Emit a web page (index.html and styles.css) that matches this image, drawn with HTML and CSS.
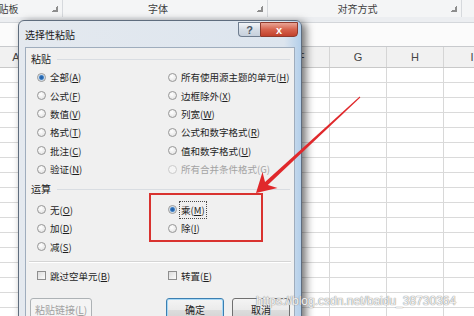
FILE: index.html
```html
<!DOCTYPE html>
<html lang="zh-CN">
<head>
    <meta charset="UTF-8">
    <title>选择性粘贴</title>
    <link rel="stylesheet" href="styles.css">
</head>
<body>

<div class="ribbon">
    <div class="group g1"><span class="glabel">剪贴板</span><i class="launcher"></i></div>
    <div class="group g2"><span class="glabel">字体</span><i class="launcher"></i></div>
    <div class="group g3"><span class="glabel">对齐方式</span><i class="launcher"></i></div>
</div>
<div class="ribbon-foot"></div>
<div class="formula"></div>

<div class="sheet-head">
    <span>A</span><span>B</span><span>C</span><span>D</span><span>E</span>
    <span>F</span><span>G</span><span>H</span><span>I</span>
</div>
<div class="sheet-body"></div>

<div class="dialog">
    <div class="titlebar">
        <span class="title">选择性粘贴</span>
        <div class="caption">
            <span class="cap-help">?</span>
            <span class="cap-close">x</span>
        </div>
    </div>
    <div class="client">
        <div class="sec"><span>粘贴</span></div>
        <div class="opts paste">
            <span class="opt"><i class="rb on"></i>全部(<u>A</u>)</span>
            <span class="opt"><i class="rb"></i>公式(<u>F</u>)</span>
            <span class="opt"><i class="rb"></i>数值(<u>V</u>)</span>
            <span class="opt"><i class="rb"></i>格式(<u>T</u>)</span>
            <span class="opt"><i class="rb"></i>批注(<u>C</u>)</span>
            <span class="opt"><i class="rb"></i>验证(<u>N</u>)</span>
            <span class="opt"><i class="rb"></i>所有使用源主题的单元(<u>H</u>)</span>
            <span class="opt"><i class="rb"></i>边框除外(<u>X</u>)</span>
            <span class="opt"><i class="rb"></i>列宽(<u>W</u>)</span>
            <span class="opt"><i class="rb"></i>公式和数字格式(<u>R</u>)</span>
            <span class="opt"><i class="rb"></i>值和数字格式(<u>U</u>)</span>
            <span class="opt off"><i class="rb"></i>所有合并条件格式(G)</span>
        </div>

        <div class="sec sec-op"><span>运算</span></div>
        <div class="opts ops">
            <span class="opt"><i class="rb"></i>无(<u>O</u>)</span>
            <span class="opt"><i class="rb"></i>加(<u>D</u>)</span>
            <span class="opt"><i class="rb"></i>减(<u>S</u>)</span>
            <span class="opt"><i class="rb on"></i><span class="focus">乘(<u>M</u>)</span></span>
            <span class="opt"><i class="rb"></i>除(<u>I</u>)</span>
        </div>

        <div class="sep"></div>

        <div class="opts checks">
            <span class="opt"><i class="cb"></i>跳过空单元(<u>B</u>)</span>
            <span class="opt"><i class="cb"></i>转置(<u>E</u>)</span>
        </div>

        <div class="buttons">
            <button class="btn btn-link" disabled>粘贴链接(<u>L</u>)</button>
            <button class="btn btn-ok">确定</button>
            <button class="btn btn-cancel">取消</button>
        </div>
    </div>
</div>

<div class="mark-box"></div>
<svg class="mark-arrow" width="474" height="316" viewBox="0 0 474 316">
    <polygon points="359.7,96.6 360.3,97.4 266.2,186.4 263.4,183.4" fill="#e0282b"/>
    <polygon points="256,193 262.5,172 265.6,184.2 277.5,188" fill="#e0282b"/>
</svg>

<div class="watermark">https://blog.csdn.net/baidu_38730364</div>

</body>
</html>
```

FILE: styles.css
```css
* {
    box-sizing: border-box;
}

body {
    margin: 0;
    width: 474px;
    height: 316px;
    overflow: hidden;
    position: relative;
    background: #fff;
    color: #1e1e1e;
    font-family: "Noto Sans CJK SC", "Noto Sans", sans-serif;
    font-size: 10px;
}

/* excel behind the dialog */

.ribbon {
    display: flex;
    height: 17px;
    margin-left: -41px;
    background: #f4f5f6;
    color: #3d3d3d;
}

.group {
    position: relative;
    display: flex;
    padding-right: 14px;
    border-right: 1px solid #d6d9dd;
}

.glabel {
    flex: 1;
    text-align: center;
    line-height: 17px;
}

.launcher {
    position: absolute;
    right: 4px;
    top: 6px;
    width: 6px;
    height: 6px;
    border-right: 1px solid #8d8d8d;
    border-bottom: 1px solid #8d8d8d;
}

.launcher::after {
    content: "";
    position: absolute;
    left: 1px;
    top: 1px;
    width: 3px;
    height: 3px;
    border-right: 1px solid #8d8d8d;
    border-bottom: 1px solid #8d8d8d;
}

.g1 { width: 104px; }
.g2 { width: 205px; }
.g3 { width: 194px; }

.ribbon-foot {
    height: 6px;
    background: #eceef1;
    border-bottom: 1px solid #d4d7db;
}

.formula {
    height: 24px;
    background: #fbfbfb;
    border-bottom: 1px solid #c8cacd;
}

.sheet-head {
    display: flex;
    height: 21px;
    margin-left: -12px;
    background: #f1f1f1;
    border-bottom: 1px solid #c9c9c9;
    color: #444;
    font-family: "Liberation Sans", sans-serif;
    font-size: 11px;
}

.sheet-head span {
    flex: 0 0 57px;
    line-height: 20px;
    text-align: center;
    border-right: 1px solid #d5d5d5;
}

.sheet-body {
    height: 250px;
    margin-left: -12px;
    background-image:
        repeating-linear-gradient(to bottom, transparent 0 14px, #dadada 14px 15px),
        repeating-linear-gradient(to right, transparent 0 56px, #d8d8d8 56px 57px);
}

/* the paste special dialog */

.dialog {
    position: absolute;
    left: 18px;
    top: 20px;
    width: 284px;
    height: 310px;
    padding: 0 6px;
    background: linear-gradient(to right, #e4e9ef, #dde5ee 94%, #b3cfea);
    border: 1px solid #5f6d7e;
    border-radius: 6px 6px 0 0;
    box-shadow: 4px 2px 9px rgba(0, 0, 0, 0.55);
}

.titlebar {
    display: flex;
    justify-content: space-between;
    align-items: flex-start;
    height: 26px;
}

.title {
    line-height: 27px;
    color: #1b1b1b;
}

.caption {
    display: flex;
    margin-top: 1px;
    margin-right: -3px;
}

.cap-help,
.cap-close {
    height: 15px;
    line-height: 14px;
    text-align: center;
    border: 1px solid #6f7d8f;
    font-family: "Liberation Sans", sans-serif;
    font-weight: bold;
}

.cap-help {
    width: 22px;
    border-right: none;
    border-radius: 0 0 0 4px;
    background: linear-gradient(#f2f5f8, #d5dde6 50%, #c6d0dc);
    color: #4a5563;
    font-size: 11px;
}

.cap-close {
    width: 38px;
    border-color: #8e3a2d;
    border-radius: 0 0 4px 0;
    background: linear-gradient(#e9a596, #d6634d 50%, #c2412c);
    color: #fff;
    font-size: 11px;
}

.client {
    height: 290px;
    background: #f0f0f0;
    border: 1px solid #9fadbd;
    font-size: 9.5px;
}

.sec {
    display: flex;
    align-items: center;
    height: 14px;
    margin-top: 3px;
    padding-left: 5px;
    font-size: 10px;
}

.sec::after {
    content: "";
    flex: 1;
    height: 1px;
    margin: 2px 4px 0 6px;
    background: #d9dde2;
}

.sec-op {
    margin-top: 3.6px;
}

.opts {
    display: grid;
    grid-template-columns: 131px 1fr;
    grid-auto-flow: column;
    padding-left: 11px;
}

.paste {
    grid-template-rows: repeat(6, 18.4px);
    margin-top: 3px;
}

.ops {
    grid-template-rows: repeat(3, 18.4px);
    margin-top: 4.8px;
}

.opt {
    display: flex;
    align-items: center;
    white-space: nowrap;
}

.opt u {
    text-decoration-thickness: 1px;
    text-underline-offset: 1px;
}

.off {
    color: #a3a3a3;
}

.rb {
    flex: 0 0 9px;
    height: 9px;
    margin-right: 4px;
    border: 1px solid #979797;
    border-radius: 50%;
    background: radial-gradient(circle at 40% 35%, #ffffff, #dedede);
}

.rb.on {
    background: radial-gradient(circle, #1f5ea8 0, #2f70b8 1.8px, #93bbe3 2.6px, #f3f3f3 3.3px);
}

.off .rb {
    border-color: #cacaca;
    background: #f5f5f5;
}

.focus {
    outline: 1px dotted #4a4a4a;
    outline-offset: 1px;
}

.sep {
    height: 2px;
    margin: 5px 3px 0;
    border-top: 1px solid #d5d5d5;
    border-bottom: 1px solid #fff;
}

.checks {
    grid-template-rows: 18px;
    margin-top: 4px;
}

.cb {
    flex: 0 0 9px;
    height: 9px;
    margin-right: 4px;
    border: 1px solid #8e8e8e;
    background: linear-gradient(135deg, #dcdcdc, #fbfbfb);
}

.buttons {
    display: flex;
    margin-top: 13px;
    padding: 0 4px;
}

.btn {
    height: 23px;
    padding: 0;
    border: 1px solid #707070;
    border-radius: 3px;
    background: linear-gradient(#f4f4f4, #ebebeb 50%, #dddddd 51%, #d2d2d2);
    color: #1e1e1e;
    font-family: inherit;
    font-size: 10px;
}

.btn-link {
    width: 62px;
    border-color: #adb2b5;
    background: #f4f4f4;
    color: #a0a0a0;
}

.btn-ok {
    width: 58px;
    margin-left: auto;
    border-color: #3c7fb1;
    box-shadow: inset 0 0 0 1px #a6d8f6;
}

.btn-cancel {
    width: 58px;
    margin-left: 8px;
}

/* annotations drawn on top of the screenshot */

.mark-box {
    position: absolute;
    left: 149px;
    top: 193px;
    width: 114px;
    height: 49px;
    border: 2px solid #d9322f;
}

.mark-arrow {
    position: absolute;
    left: 0;
    top: 0;
    pointer-events: none;
}

.watermark {
    position: absolute;
    left: 256px;
    top: 294px;
    color: rgba(255, 255, 255, 0.9);
    font-family: "Liberation Sans", sans-serif;
    font-size: 12px;
    text-shadow: 0 0 1px #8a8a8a, 0 0 1px #8a8a8a;
    white-space: nowrap;
}
```
